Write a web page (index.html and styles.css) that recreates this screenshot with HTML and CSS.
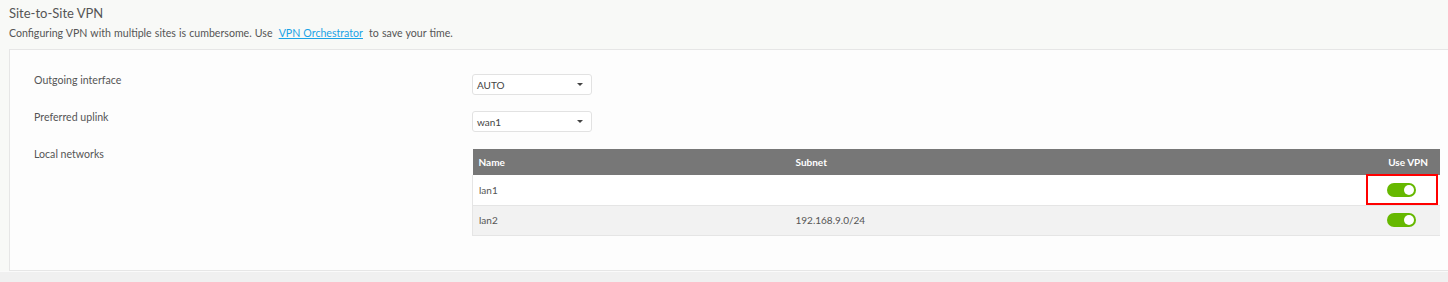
FILE: index.html
```html
<!DOCTYPE html>
<html>
<head>
<meta charset="utf-8">
<link rel="stylesheet" href="styles.css">
</head>
<body>
<div class="page">
  <div class="head">
    <div class="title">Site-to-Site VPN</div>
    <div class="desc">Configuring VPN with multiple sites is cumbersome. Use <a class="link" href="#">VPN Orchestrator</a> to save your time.</div>
  </div>
  <div class="card">
    <div class="form">
      <div class="label">Outgoing interface</div>
      <div class="field"><div class="select"><span>AUTO</span><span class="caret"></span></div></div>
      <div class="label">Preferred uplink</div>
      <div class="field"><div class="select"><span>wan1</span><span class="caret"></span></div></div>
      <div class="label">Local networks</div>
      <div class="field">
        <table class="tbl">
          <thead>
            <tr><th class="c-name">Name</th><th class="c-sub">Subnet</th><th class="c-vpn">Use VPN</th></tr>
          </thead>
          <tbody>
            <tr class="r1"><td>lan1</td><td></td><td class="c-vpn"><span class="mark"></span><span class="toggle"><span class="knob"></span></span></td></tr>
            <tr class="r2"><td>lan2</td><td>192.168.9.0/24</td><td class="c-vpn"><span class="toggle"><span class="knob"></span></span></td></tr>
          </tbody>
        </table>
      </div>
    </div>
  </div>
  <div class="foot"></div>
</div>
</body>
</html>
```
FILE: styles.css
```css
html, body {
  margin: 0;
  padding: 0;
}
body {
  background: #f8f9f7;
  font-family: Lato, "Noto Sans", sans-serif;
  color: #555;
  width: 1448px;
  height: 282px;
  overflow: hidden;
}
.page {
  display: flex;
  flex-direction: column;
  height: 282px;
}
.head {
  padding: 6px 0 0 9px;
  height: 49px;
  box-sizing: border-box;
}
.title {
  font-size: 13px;
  line-height: 14px;
  color: #555;
}
.desc {
  margin-top: 6px;
  font-size: 10.6px;
  line-height: 14px;
  color: #555;
  word-spacing: 0.4px;
}
.link {
  color: #1aa3e6;
  text-decoration: underline;
  margin: 0 3px;
}
.card {
  margin-left: 9px;
  height: 222px;
  box-sizing: border-box;
  background: #fdfdfd;
  border: 1px solid #e6e6e6;
  border-right: none;
  padding: 24px 0 0 24px;
}
.foot {
  flex: 1;
  background: #f0f0f0;
  border-top: 1px solid #fafafa;
}
.form {
  display: grid;
  grid-template-columns: 438px 968px;
  row-gap: 16px;
}
.label {
  font-size: 10.6px;
  line-height: 12px;
  color: #555;
}
.select {
  width: 120px;
  height: 21px;
  box-sizing: border-box;
  border: 1px solid #e2e2e2;
  border-radius: 3px;
  background: #fff;
  display: flex;
  align-items: center;
  justify-content: space-between;
  padding: 0 8px 0 4px;
  font-size: 10px;
  color: #444;
}
.caret {
  width: 0;
  height: 0;
  border-left: 3px solid transparent;
  border-right: 3px solid transparent;
  border-top: 3px solid #444;
}
.tbl {
  width: 968px;
  border-collapse: collapse;
  font-size: 10px;
  margin-top: 1px;
}
.tbl th {
  background: #777;
  color: #fff;
  font-weight: bold;
  text-align: left;
  height: 26px;
  padding: 0 6px;
  box-sizing: border-box;
}
.tbl td {
  height: 30px;
  padding: 0 6px;
  border-bottom: 1px solid #e5e5e5;
  color: #555;
  box-sizing: border-box;
}
.c-name { width: 317px; }
.tbl th.c-vpn, .tbl td.c-vpn {
  text-align: right;
  padding-right: 12px;
}
.tbl td.c-vpn {
  position: relative;
  padding-right: 24px;
}
.r1 td { background: #fff; }
.r2 td { background: #f2f2f2; }
.tbl tbody tr td:first-child { border-left: 1px solid #e5e5e5; }
.toggle {
  display: inline-block;
  vertical-align: middle;
  width: 29px;
  height: 14px;
  border-radius: 7px;
  background: #66b800;
  position: relative;
}
.knob {
  position: absolute;
  right: 2px;
  top: 2px;
  width: 10px;
  height: 10px;
  border-radius: 50%;
  background: #fff;
}
.mark {
  position: absolute;
  right: 2px;
  top: -1px;
  width: 72px;
  height: 31px;
  box-sizing: border-box;
  border: 2px solid #ff0000;
}
```
